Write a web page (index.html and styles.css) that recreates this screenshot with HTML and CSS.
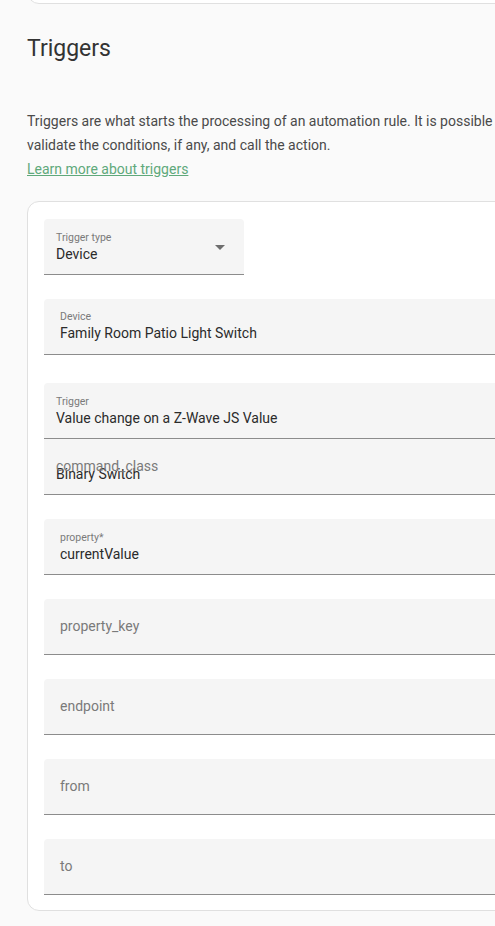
FILE: index.html
```html
<!doctype html>
<html>
  <head>
    <title>Triggers</title>
    <meta name="viewport" content="width=device-width, initial-scale=1">
    <link rel="stylesheet" href="styles.css">
  </head>
  <body>
    <div class="page">
      <div class="card card-prev"></div>

      <h1>Triggers</h1>
      <p class="intro">
        Triggers are what starts the processing of an automation rule. It is possible to specify multiple triggers for the same rule. Once a trigger starts, Home Assistant will<br>
        validate the conditions, if any, and call the action.<br>
        <a href="#">Learn more about triggers</a>
      </p>

      <div class="card trigger-card">
        <div class="field select narrow tight">
          <span class="label">Trigger type</span>
          <span class="value">Device</span>
          <span class="arrow"></span>
        </div>

        <div class="field device">
          <span class="label">Device</span>
          <span class="value">Family Room Patio Light Switch</span>
        </div>

        <div class="group">
          <div class="field tight">
            <span class="label">Trigger</span>
            <span class="value">Value change on a Z-Wave JS Value</span>
          </div>
          <div class="field tight flat">
            <span class="placeholder overlay">command_class</span>
            <span class="value low">Binary Switch</span>
          </div>
        </div>

        <div class="field">
          <span class="label">property*</span>
          <span class="value">currentValue</span>
        </div>

        <div class="field empty">
          <span class="placeholder">property_key</span>
        </div>

        <div class="field empty">
          <span class="placeholder">endpoint</span>
        </div>

        <div class="field empty">
          <span class="placeholder">from</span>
        </div>

        <div class="field empty">
          <span class="placeholder">to</span>
        </div>
      </div>
    </div>
  </body>
</html>
```

FILE: styles.css
```css
html {
  box-sizing: border-box;
}
*, *::before, *::after {
  box-sizing: inherit;
}
body {
  margin: 0;
  background: #fafafa;
  font-family: Roboto, "Liberation Sans", sans-serif;
  color: #212121;
  overflow: hidden;
}
.page {
  width: 1100px;
  padding-left: 27px;
}
.card {
  background: #fff;
  border: 1px solid #e0e0e0;
  border-radius: 12px;
}
.card-prev {
  height: 40px;
  margin-top: -36px;
}
h1 {
  margin: 29px 0 0;
  font-size: 23px;
  line-height: 32px;
  font-weight: 400;
  color: #333;
}
.intro {
  margin: 44px 0 0;
  font-size: 14px;
  line-height: 24px;
  color: #4a4a4a;
}
.intro a {
  color: #5fa97b;
  text-decoration: underline;
}
.trigger-card {
  margin-top: 20px;
  padding: 17px 16px 15px;
  display: flex;
  flex-direction: column;
  gap: 24px;
}
.field {
  position: relative;
  height: 56px;
  padding: 12px 16px 0;
  background: #f5f5f5;
  border-bottom: 1px solid #8c8c8c;
  border-radius: 4px 4px 0 0;
  display: flex;
  flex-direction: column;
}
.field.tight {
  padding-left: 12px;
  padding-right: 12px;
}
.field.flat {
  border-radius: 0;
}
.field.narrow {
  width: 200px;
}
.field.device {
  margin-bottom: 4px;
  padding-top: 11px;
}
.field.empty {
  padding-top: 17px;
}
.label {
  font-size: 10.5px;
  line-height: 13px;
  color: #7a7a7a;
}
.value {
  font-size: 14px;
  line-height: 20px;
  color: #2b2b2b;
}
.value.low {
  margin-top: 13px;
}
.placeholder {
  font-size: 14px;
  line-height: 20px;
  color: #7a7a7a;
}
.placeholder.overlay {
  position: absolute;
  left: 12px;
  top: 17px;
}
.arrow {
  position: absolute;
  right: 19px;
  top: 26px;
  width: 0;
  height: 0;
  border-left: 5px solid transparent;
  border-right: 5px solid transparent;
  border-top: 5px solid #6e6e6e;
}
```
